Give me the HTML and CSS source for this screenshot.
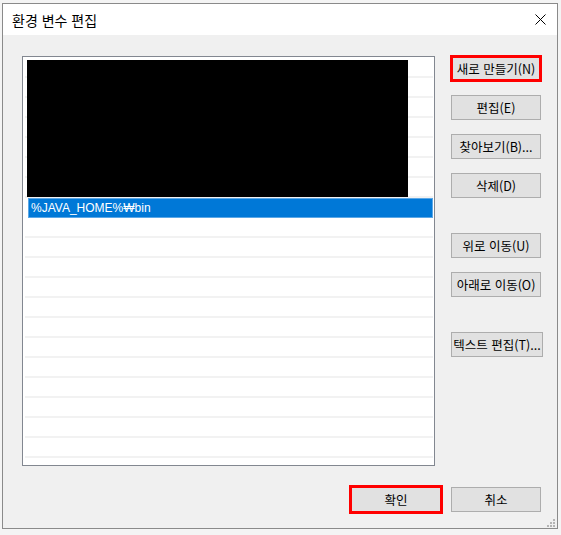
FILE: index.html
```html
<!DOCTYPE html>
<html lang="ko">
<head>
<meta charset="utf-8">
<title>환경 변수 편집</title>
<link rel="stylesheet" href="styles.css">
</head>
<body>
<div class="window">
  <div class="titlebar">
    <span class="title">환경 변수 편집</span>
    <svg class="close" width="11" height="11" viewBox="0 0 11 11"><path d="M0.5 0.5 L10.5 10.5 M10.5 0.5 L0.5 10.5" stroke="#000" stroke-width="1" fill="none"/></svg>
  </div>
  <div class="body">
    <div class="main">
      <div class="list">
        <div class="row"></div>
        <div class="row"></div>
        <div class="row"></div>
        <div class="row"></div>
        <div class="row"></div>
        <div class="row"></div>
        <div class="row"></div>
        <div class="row selected">%JAVA_HOME%₩bin</div>
        <div class="row"></div>
        <div class="row"></div>
        <div class="row"></div>
        <div class="row"></div>
        <div class="row"></div>
        <div class="row"></div>
        <div class="row"></div>
        <div class="row"></div>
        <div class="row"></div>
        <div class="row"></div>
        <div class="row"></div>
        <div class="row"></div>
        <div class="row"></div>
        <div class="redact"></div>
      </div>
      <div class="buttons">
        <button class="btn marked">새로 만들기(N)</button>
        <button class="btn">편집(E)</button>
        <button class="btn">찾아보기(B)...</button>
        <button class="btn">삭제(D)</button>
        <button class="btn group">위로 이동(U)</button>
        <button class="btn">아래로 이동(O)</button>
        <button class="btn group wide">텍스트 편집(T)...</button>
      </div>
    </div>
    <div class="footer">
      <button class="btn ok">확인</button>
      <button class="btn">취소</button>
    </div>
  </div>
  <svg class="grip" width="9" height="9" viewBox="0 0 9 9">
    <rect x="7" y="1" width="2" height="2" fill="#b4b4b4"/>
    <rect x="4" y="4" width="2" height="2" fill="#b4b4b4"/>
    <rect x="7" y="4" width="2" height="2" fill="#b4b4b4"/>
    <rect x="1" y="7" width="2" height="2" fill="#b4b4b4"/>
    <rect x="4" y="7" width="2" height="2" fill="#b4b4b4"/>
    <rect x="7" y="7" width="2" height="2" fill="#b4b4b4"/>
  </svg>
</div>
</body>
</html>
```

FILE: styles.css
```css
html, body {
  margin: 0;
  padding: 0;
}
body {
  background: #f4f4f4;
  width: 561px;
  height: 535px;
  overflow: hidden;
  font-family: "Noto Sans CJK KR", sans-serif;
}
.window {
  margin: 3px 0 0 2px;
  width: 556px;
  height: 526px;
  box-sizing: border-box;
  border: 1px solid #8a8a8a;
  background: #f0f0f0;
  display: flex;
  flex-direction: column;
  position: relative;
}
.titlebar {
  height: 31px;
  flex: none;
  background: #ffffff;
  display: flex;
  align-items: center;
  justify-content: space-between;
  padding: 0 11px 0 9px;
}
.title {
  font-size: 14px;
  line-height: 1;
  color: #000;
}
.close {
  display: block;
}
.body {
  flex: 1;
  padding: 21px 16px 0 19px;
  display: flex;
  flex-direction: column;
}
.main {
  display: flex;
  gap: 16px;
  align-items: flex-start;
}
.list {
  width: 413px;
  height: 410px;
  box-sizing: border-box;
  border: 1px solid #828790;
  background: #ffffff;
  padding: 1px 1px 0 2px;
  overflow: hidden;
  position: relative;
  flex: none;
}
.row {
  height: 20px;
  box-sizing: border-box;
  border-bottom: 2px solid #f2f2f2;
}
.row.selected {
  background: #0078d7;
  border: 1px solid #5ba7e6;
  margin-left: 3px;
  color: #ffffff;
  font: 12px "Liberation Sans", "Noto Sans CJK KR", sans-serif;
  line-height: 18px;
  padding-left: 2px;
}
.redact {
  position: absolute;
  left: 4px;
  top: 3px;
  width: 381px;
  height: 137px;
  background: #000;
}
.buttons {
  display: flex;
  flex-direction: column;
  gap: 14px;
}
.btn {
  width: 90px;
  height: 25px;
  box-sizing: border-box;
  border: 1px solid #adadad;
  background: #e1e1e1;
  font: 12.5px "Noto Sans CJK KR", sans-serif;
  color: #000;
  padding: 0;
  margin: 0;
  display: flex;
  align-items: center;
  justify-content: center;
  white-space: nowrap;
}
.btn.group {
  margin-top: 21px;
}
.btn.wide {
  width: 92px;
}
.btn.marked {
  outline: 3px solid #ff0000;
  outline-offset: -2px;
}
.btn.ok {
  outline: 3px solid #ff0000;
  outline-offset: -1px;
}
.footer {
  display: flex;
  justify-content: flex-end;
  gap: 10px;
  margin-top: 21px;
}
.grip {
  position: absolute;
  right: 2px;
  bottom: 1px;
}
```
